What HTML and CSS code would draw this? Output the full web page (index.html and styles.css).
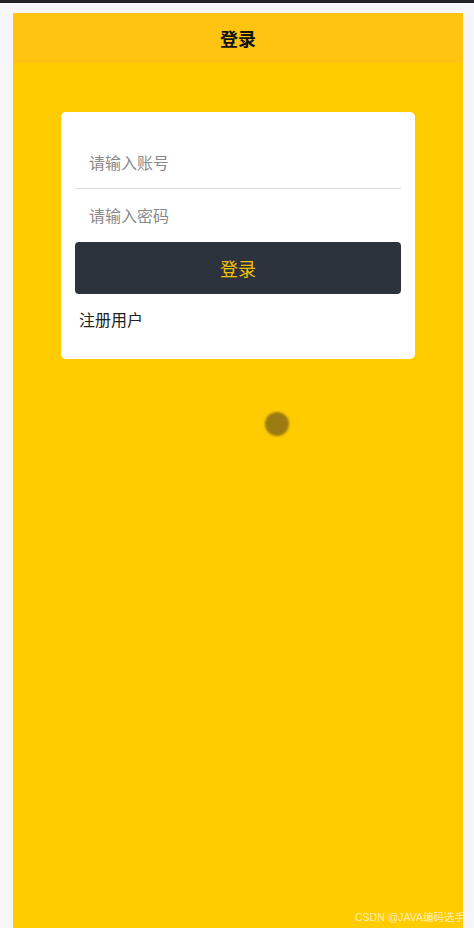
FILE: index.html
```html
<!DOCTYPE html>
<html lang="zh-CN">
<head>
    <meta charset="UTF-8">
    <meta name="viewport" content="width=device-width, initial-scale=1.0">
    <title>登录</title>
    <link rel="stylesheet" href="styles.css">
</head>
<body>

<div class="topbar"></div>

<div class="phone">
    <div class="header">登录</div>

    <div class="main">
        <div class="login-card">
            <div class="field field-line">
                <input type="text" placeholder="请输入账号">
            </div>
            <div class="field">
                <input type="password" placeholder="请输入密码">
            </div>
            <button class="login-btn">登录</button>
            <a href="#" class="register">注册用户</a>
        </div>

        <div class="cursor-dot"></div>
    </div>

    <div class="watermark">CSDN @JAVA编码选手</div>
</div>

</body>
</html>
```

FILE: styles.css
```css
body {
    margin: 0;
    height: 928px;
    background-color: #f6f6f8;
    font-family: "Noto Sans CJK SC", "Noto Sans", sans-serif;
    overflow: hidden;
}

.topbar {
    height: 3px;
    background-color: #222;
}

.phone {
    position: relative;
    margin: 10px 11px 0 13px;
    height: 915px;
    background-color: #ffcc00;
    display: flex;
    flex-direction: column;
}

.header {
    height: 50px;
    line-height: 50px;
    text-align: center;
    background-color: #ffc412;
    font-size: 18px;
    font-weight: bold;
    color: #111;
}

.main {
    padding: 49px 48px 0 48px;
    display: flex;
    flex-direction: column;
}

.login-card {
    background-color: #fff;
    border-radius: 5px;
    padding: 24px 14px 28px 14px;
    display: flex;
    flex-direction: column;
}

.field {
    height: 52px;
    display: flex;
    align-items: center;
}

.field-line {
    border-bottom: 1px solid #dcdcdc;
}

.field input {
    border: none;
    outline: none;
    width: 100%;
    padding: 0 14px;
    font-family: inherit;
    font-size: 16px;
    color: #333;
    background: transparent;
}

.field input::placeholder {
    color: #8a8a8a;
}

.login-btn {
    margin-top: 1px;
    height: 52px;
    background-color: #2c333d;
    color: #f2c200;
    border: none;
    border-radius: 4px;
    font-family: inherit;
    font-size: 18px;
    cursor: pointer;
}

.register {
    margin: 13px 0 0 4px;
    font-size: 16px;
    color: #222;
    text-decoration: none;
}

.cursor-dot {
    align-self: center;
    margin: 53px 0 0 78px;
    width: 24px;
    height: 24px;
    border-radius: 50%;
    background-color: #9c7a12;
    filter: blur(1px);
}

.watermark {
    position: absolute;
    right: -2px;
    bottom: 4px;
    font-family: "Liberation Sans", "Noto Sans CJK SC", sans-serif;
    font-size: 10.5px;
    color: rgba(255, 255, 255, 0.7);
}
```
